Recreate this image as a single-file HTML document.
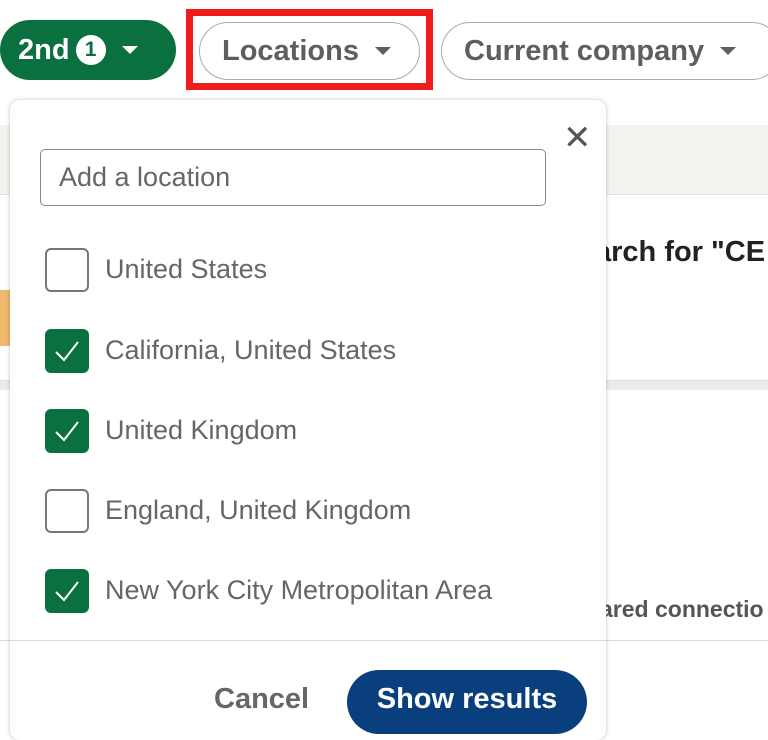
<!DOCTYPE html>
<html><head><style>
*{margin:0;padding:0;box-sizing:border-box}
body{width:768px;height:719px;overflow:hidden;background:#fff;position:relative;font-family:"Liberation Sans",Arial,sans-serif}
.a{position:absolute}
.pill{position:absolute;border-radius:30px;height:58px;top:22px;font-size:29px;color:#5e5e5e;font-weight:bold;display:flex;align-items:center}
.tri{display:inline-block;width:0;height:0;border-left:8px solid transparent;border-right:8px solid transparent;border-top:8px solid currentColor;margin-left:16px}
.cb{position:absolute;left:45px;width:44px;height:44px;border-radius:6px;border:2px solid #777;background:#fff}
.cb.on{background:#0b7040;border-color:#0b7040}
.lbl{position:absolute;left:105px;font-size:27px;color:#666}
</style></head><body>
<div class="a" style="left:0;top:125px;width:768px;height:70px;background:#f3f2ef;border-bottom:1px solid #e2e2e2"></div>
<div class="a" style="left:0;top:380px;width:768px;height:10px;background:#ececea;border-top:1px solid #ddd"></div>
<div class="a" style="left:0;top:290px;width:10px;height:56px;background:#f0b86a"></div>
<div class="a" style="left:0;top:640px;width:768px;height:1px;background:#ddd"></div>
<div class="a" style="left:595px;top:236px;font-size:29px;font-weight:bold;color:#222">arch for "CE</div>
<div class="a" style="left:600px;top:596px;font-size:23px;font-weight:bold;color:#555">ared connectio</div>

<div class="pill" style="left:0;top:20px;height:60px;width:176px;background:#0b7040;color:#fff;padding-left:18px">2nd<span style="display:inline-block;width:30px;height:30px;border-radius:50%;background:#fff;color:#0b7040;font-size:21px;text-align:center;line-height:30px;margin-left:6px">1</span><span class="tri" style="margin-left:16px"></span></div>
<div class="a" style="left:186px;top:9px;width:247px;height:81px;border:7px solid #f01b1b"></div>
<div class="pill" style="left:199px;width:221px;border:1.5px solid #aaa;padding-left:22px">Locations<span class="tri"></span></div>
<div class="pill" style="left:441px;width:340px;border:1.5px solid #aaa;padding-left:22px">Current company<span class="tri"></span></div>

<div class="a" style="left:10px;top:100px;width:596px;height:640px;background:#fff;border-radius:10px;box-shadow:0 0 4px rgba(0,0,0,.25)"></div>
<div class="a" style="left:563px;top:118px;font-size:34px;color:#555;font-weight:300">✕</div>
<div class="a" style="left:40px;top:149px;width:506px;height:57px;border:1.5px solid #888;border-radius:5px;font-size:27px;color:#666;padding:12px 0 0 18px">Add a location</div>

<div class="cb" style="top:248px"></div><div class="lbl" style="top:254px">United States</div>
<div class="cb on" style="top:329px"><svg width="40" height="40" viewBox="0 0 40 40"><path d="M9 21 L17 29 L31 11" fill="none" stroke="#fff" stroke-width="2"/></svg></div><div class="lbl" style="top:335px">California, United States</div>
<div class="cb on" style="top:409px"><svg width="40" height="40" viewBox="0 0 40 40"><path d="M9 21 L17 29 L31 11" fill="none" stroke="#fff" stroke-width="2"/></svg></div><div class="lbl" style="top:415px">United Kingdom</div>
<div class="cb" style="top:489px"></div><div class="lbl" style="top:495px">England, United Kingdom</div>
<div class="cb on" style="top:569px"><svg width="40" height="40" viewBox="0 0 40 40"><path d="M9 21 L17 29 L31 11" fill="none" stroke="#fff" stroke-width="2"/></svg></div><div class="lbl" style="top:575px">New York City Metropolitan Area</div>

<div class="a" style="left:10px;top:640px;width:596px;height:1px;background:#ddd"></div>
<div class="a" style="left:214px;top:683px;font-size:29px;font-weight:bold;color:#666">Cancel</div>
<div class="a" style="left:347px;top:670px;width:240px;height:64px;border-radius:32px;background:#0a3f7e;color:#fff;font-size:29px;font-weight:bold;text-align:center;padding-top:13px">Show results</div>
</body></html>
